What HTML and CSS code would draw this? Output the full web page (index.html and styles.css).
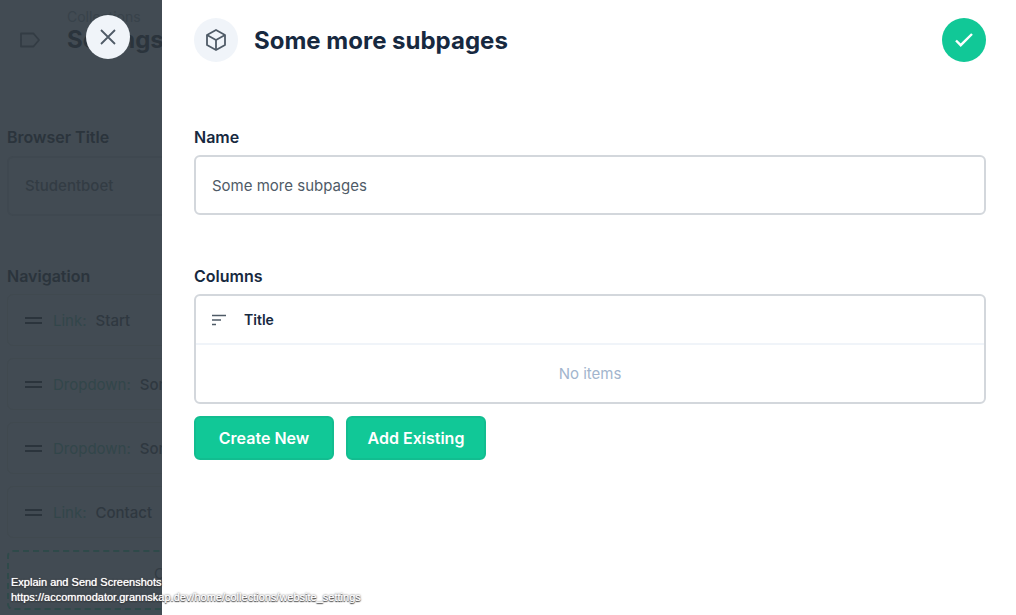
FILE: index.html
```html
<!DOCTYPE html>
<html lang="en">
<head>
    <meta charset="UTF-8">
    <meta name="viewport" content="width=device-width, initial-scale=1.0">
    <title>Some more subpages</title>
    <link rel="stylesheet" href="styles.css">
</head>
<body>
    <div class="page">
        <div class="page-header">
            <svg class="page-icon" width="24" height="24" viewBox="0 0 24 24" fill="none" stroke="currentColor" stroke-width="1.800" stroke-linejoin="round"><path d="M3 5.500h12.500l5.500 6.500-5.500 6.500H3z"/></svg>
            <div class="page-titles">
                <div class="crumb">Collections</div>
                <div class="page-title">Settings</div>
            </div>
        </div>
        <div class="page-label">Browser Title</div>
        <div class="page-input">Studentboet</div>
        <div class="page-label nav-label">Navigation</div>
        <div class="nav-list">
            <div class="nav-row"><span class="handle"></span><span class="kind">Link:</span><span class="val">Start</span></div>
            <div class="nav-row"><span class="handle"></span><span class="kind">Dropdown:</span><span class="val">Some</span></div>
            <div class="nav-row"><span class="handle"></span><span class="kind">Dropdown:</span><span class="val">Some</span></div>
            <div class="nav-row"><span class="handle"></span><span class="kind">Link:</span><span class="val">Contact</span></div>
        </div>
        <div class="nav-add">Create</div>
    </div>

    <button class="close-btn" aria-label="Close">
        <svg width="24" height="24" viewBox="0 0 24 24" fill="none" stroke="currentColor" stroke-width="1.800"><path d="M5 5l14 14M19 5L5 19"/></svg>
    </button>

    <div class="drawer">
        <div class="drawer-header">
            <span class="head-icon">
                <svg width="24" height="24" viewBox="0 0 24 24" fill="none" stroke="currentColor" stroke-width="1.800" stroke-linejoin="round"><path d="M12 2l9 5v10l-9 5-9-5V7z"/><path d="M3 7l9 5 9-5M12 12v10"/></svg>
            </span>
            <h1>Some more subpages</h1>
            <button class="save-btn" aria-label="Save">
                <svg width="24" height="24" viewBox="0 0 24 24" fill="none" stroke="currentColor" stroke-width="2.400"><path d="M4 12.500l4.700 4.700L20 6"/></svg>
            </button>
        </div>

        <label class="field-label">Name</label>
        <div class="text-input">Some more subpages</div>

        <label class="field-label columns-label">Columns</label>
        <div class="table">
            <div class="table-head">
                <svg width="16" height="16" viewBox="0 0 16 16" fill="none" stroke="currentColor" stroke-width="1.400"><path d="M1 3.500h14M1 8h9M1 12.500h4"/></svg>
                <span>Title</span>
            </div>
            <div class="table-empty">No items</div>
        </div>
        <div class="actions">
            <button class="btn">Create New</button>
            <button class="btn">Add Existing</button>
        </div>
    </div>

    <div class="caption">
        <div>Explain and Send Screenshots</div>
        <div>https://accommodator.grannskap.dev/home/collections/website_settings</div>
    </div>
</body>
</html>
```

FILE: styles.css
```css
* {
    box-sizing: border-box;
}
html, body {
    margin: 0;
    height: 100%;
    overflow: hidden;
}
body {
    position: relative;
    font-family: Inter, "Liberation Sans", sans-serif;
    background-color: #424b53;
}

/* page behind the overlay */
.page {
    height: 100%;
    padding-left: 7px;
    color: #2b343c;
    overflow: hidden;
}
.page-header {
    display: flex;
    align-items: flex-start;
    height: 122px;
    padding: 8px 0 0 11px;
}
.page-icon {
    color: #333c44;
    margin-top: 20px;
}
.page-titles {
    margin-left: 25px;
}
.crumb {
    font-size: 14px;
    line-height: 17px;
    color: #38424a;
}
.page-title {
    font-size: 24px;
    font-weight: 700;
    line-height: 29px;
}
.page-label {
    font-size: 16px;
    font-weight: 600;
    line-height: 20px;
    margin-top: 5px;
    color: #2b343c;
}
.page-input {
    width: 300px;
    height: 60px;
    margin-top: 9px;
    padding: 0 16px;
    border: 2px solid #3f4850;
    border-radius: 6px;
    font-size: 15px;
    font-weight: 500;
    line-height: 56px;
    color: #333c44;
}
.nav-label {
    margin-top: 50px;
}
.nav-list {
    margin-top: 8px;
}
.nav-row {
    display: flex;
    align-items: center;
    width: 300px;
    height: 52px;
    margin-bottom: 12px;
    padding-left: 17px;
    border: 1px solid #40494f;
    border-radius: 6px;
    font-size: 15px;
}
.handle {
    width: 17px;
    height: 7px;
    margin-right: 11px;
    border-top: 2px solid #2b343c;
    border-bottom: 2px solid #2b343c;
}
.kind {
    color: #32464a;
    margin-right: 9px;
}
.val {
    color: #2f3840;
    font-weight: 500;
}
.nav-add {
    width: 300px;
    height: 60px;
    padding: 12px 0 0 145px;
    border: 2px dashed #2f4a4a;
    border-radius: 6px;
    font-size: 15px;
    color: #333c44;
}

.close-btn {
    position: absolute;
    left: 86px;
    top: 15px;
    width: 44px;
    height: 44px;
    display: flex;
    align-items: center;
    justify-content: center;
    padding: 0;
    border: none;
    border-radius: 50%;
    background-color: #f0f4f9;
    color: #4f5b67;
}

/* drawer */
.drawer {
    position: absolute;
    left: 162px;
    top: 0;
    right: 0;
    bottom: 0;
    padding: 18px 30px 0 32px;
    background-color: #fff;
    color: #172940;
}
.drawer-header {
    display: flex;
    align-items: center;
    height: 44px;
    margin-bottom: 65px;
}
.head-icon {
    display: flex;
    align-items: center;
    justify-content: center;
    width: 44px;
    height: 44px;
    border-radius: 50%;
    background-color: #f0f4f9;
    color: #4f5b67;
}
h1 {
    flex: 1;
    margin: 0 0 0 16px;
    padding-top: 2px;
    font-size: 24px;
    font-weight: 700;
    line-height: 42px;
    color: #172940;
}
.save-btn {
    display: flex;
    align-items: center;
    justify-content: center;
    width: 44px;
    height: 44px;
    padding: 0;
    border: none;
    border-radius: 50%;
    background-color: #11c897;
    color: #fff;
}
.field-label {
    display: block;
    font-size: 16px;
    font-weight: 600;
    line-height: 20px;
    margin-bottom: 8px;
}
.columns-label {
    margin-top: 51px;
}
.text-input {
    height: 60px;
    padding: 0 16px;
    border: 2px solid #d3d7dc;
    border-radius: 6px;
    font-size: 15px;
    line-height: 58px;
    color: #4f5b67;
}
.table {
    height: 110px;
    border: 2px solid #d3d7dc;
    border-radius: 6px;
}
.table-head {
    display: flex;
    align-items: center;
    height: 49px;
    padding-left: 15px;
    border-bottom: 2px solid #f0f4f9;
    font-size: 14px;
    font-weight: 600;
    color: #172940;
}
.table-head svg {
    color: #4f5b67;
    margin-right: 17px;
}
.table-empty {
    height: 57px;
    font-size: 15px;
    line-height: 57px;
    text-align: center;
    color: #a2b5cd;
}
.actions {
    display: flex;
    gap: 12px;
    margin-top: 12px;
}
.btn {
    width: 140px;
    height: 44px;
    padding: 0;
    border: 2px solid #12bd90;
    border-radius: 6px;
    background-color: #11c897;
    color: #fff;
    font-family: inherit;
    font-size: 16px;
    font-weight: 600;
}

/* caption burned in over everything */
.caption {
    position: absolute;
    left: 11px;
    top: 575px;
    font-family: "Liberation Sans", Arial, sans-serif;
    font-size: 11px;
    line-height: 15px;
    color: #fff;
    text-shadow: 0 0 1px #fff, 0 0 2px #222, 0 1px 1px #222;
    white-space: nowrap;
}
```
